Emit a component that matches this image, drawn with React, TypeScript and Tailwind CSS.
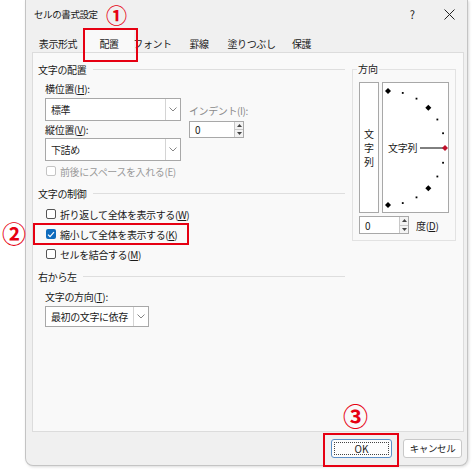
import React from 'react'

const jp = { fontFamily: '"Noto Sans CJK JP", "Noto Sans", sans-serif' }

function Chevron() {
  return (
    <svg width="8" height="5" viewBox="0 0 8 5" fill="none">
      <path d="M0.5 0.5 L4 4 L7.5 0.5" stroke="#777" strokeWidth="0.9" />
    </svg>
  )
}

function Select({ value, width, height = 23 }: { value: string; width: number; height?: number }) {
  return (
    <div className="flex border border-[#a8a8a8] bg-white" style={{ width, height }}>
      <div className="flex flex-1 items-center pl-[5px] text-[10px] tracking-[-0.4px] text-[#1a1a1a]">{value}</div>
      <div className="flex w-[15px] items-center justify-center border-l border-[#d4d4d4]">
        <Chevron />
      </div>
    </div>
  )
}

function Spinner() {
  return (
    <div className="flex w-[9px] flex-col border-l border-[#c8c8c8] bg-[#f3f3f3]">
      <div className="flex flex-1 items-center justify-center border-b border-[#c8c8c8]">
        <svg width="5" height="3" viewBox="0 0 5 3">
          <path d="M0 3 L2.5 0 L5 3 Z" fill="#444" />
        </svg>
      </div>
      <div className="flex flex-1 items-center justify-center">
        <svg width="5" height="3" viewBox="0 0 5 3">
          <path d="M0 0 L2.5 3 L5 0 Z" fill="#444" />
        </svg>
      </div>
    </div>
  )
}

function SpinBox({ width, height }: { width: number; height: number }) {
  return (
    <div className="flex border border-[#a8a8a8] bg-white" style={{ width, height }}>
      <div className="flex flex-1 items-center pl-[5px] text-[10px] text-[#1a1a1a]">0</div>
      <Spinner />
    </div>
  )
}

function Check({ checked = false, disabled = false, label }: { checked?: boolean; disabled?: boolean; label: React.ReactNode }) {
  return (
    <div className="flex h-[20px] items-center pl-[8px]">
      {checked ? (
        <div className="flex h-[10px] w-[10px] items-center justify-center rounded-[2px] bg-[#0f6cbd]">
          <svg width="8" height="7" viewBox="0 0 8 7" fill="none">
            <path d="M1 3.6 L3 5.6 L7 1.2" stroke="#fff" strokeWidth="1.2" />
          </svg>
        </div>
      ) : (
        <div className={`h-[10px] w-[10px] rounded-[2px] border bg-white ${disabled ? 'border-[#c4c4c4]' : 'border-[#555]'}`} />
      )}
      <span className={`ml-[4px] text-[10px] tracking-[-0.4px] ${disabled ? 'text-[#9a9a9a]' : 'text-[#1a1a1a]'}`}>{label}</span>
    </div>
  )
}

function SectionTitle({ children }: { children: React.ReactNode }) {
  return (
    <div className="flex h-[16px] items-center">
      <span className="text-[10px] tracking-[-0.3px] text-[#1a1a1a]">{children}</span>
      <div className="ml-[6px] h-px flex-1 bg-[#dedede]" />
    </div>
  )
}

function Dial() {
  const cx = 5
  const cy = 65
  const r = 57
  const marks = [90, 75, 60, 45, 30, 15, -15, -30, -45, -60, -75, -90]
  return (
    <svg width="65" height="129" viewBox="0 0 65 129">
      {marks.map((a) => {
        const x = cx + r * Math.cos((a * Math.PI) / 180)
        const y = cy - r * Math.sin((a * Math.PI) / 180)
        if (a % 45 === 0) return <path key={a} d={`M${x} ${y - 3} L${x + 3} ${y} L${x} ${y + 3} L${x - 3} ${y} Z`} fill="#000" />
        return <rect key={a} x={x - 0.9} y={y - 0.9} width="1.8" height="1.8" fill="#000" />
      })}
      <text x="5" y="69" fontSize="10" letterSpacing="-0.3" fill="#1a1a1a" style={jp}>
        文字列
      </text>
      <line x1="37" y1="65" x2="60" y2="65" stroke="#000" strokeWidth="1" />
      <path d="M62 62 L65 65 L62 68 L59 65 Z" fill="#c0102a" />
    </svg>
  )
}

const tabs = [
  { label: '表示形式', w: 52 },
  { label: '配置', w: 50, active: true },
  { label: 'フォント', w: 37 },
  { label: '罫線', w: 56 },
  { label: '塗りつぶし', w: 49 },
  { label: '保護', w: 51 },
]

export default function App() {
  return (
    <div className="relative h-[470px] w-[474px] overflow-hidden whitespace-nowrap bg-white" style={jp}>
      <div className="ml-[25px] flex h-[466px] w-[443px] flex-col rounded-b-[8px] border border-t-0 border-[#c4c4c4] bg-[#f0f0f0] shadow-[1px_1px_3px_rgba(0,0,0,0.15)]">
        {/* title bar */}
        <div className="flex h-[28px] items-center pl-[8px] pr-[12px]">
          <span className="text-[9.5px] tracking-[-0.4px] text-[#1a1a1a]">セルの書式設定</span>
          <span className="ml-auto text-[11px] text-[#1a1a1a]">?</span>
          <svg className="ml-[29px]" width="11" height="11" viewBox="0 0 11 11">
            <path d="M0.5 0.5 L10.5 10.5 M10.5 0.5 L0.5 10.5" stroke="#222" strokeWidth="1" />
          </svg>
        </div>

        {/* tabs */}
        <div className="flex h-[24px] pl-[6px]">
          {tabs.map((t) => (
            <div
              key={t.label}
              className={`flex justify-center pt-[9px] text-[10px] leading-[14px] tracking-[-0.4px] text-[#1a1a1a] ${t.active ? 'bg-[#f9f9f9]' : ''}`}
              style={{ width: t.w }}
            >
              {t.label}
            </div>
          ))}
        </div>

        {/* panel */}
        <div className="mx-[6px] mr-[3px] flex h-[380px] border border-[#dcdcdc] bg-[#f9f9f9] pl-[5px] pt-[8px]">
          <div className="flex w-[307px] flex-col">
            <SectionTitle>文字の配置</SectionTitle>
            <div className="ml-[7px] mt-[1px] flex h-[20px] items-center text-[10px] tracking-[-0.3px] text-[#1a1a1a]">
              横位置(<span className="underline">H</span>):
            </div>
            <div className="ml-[7px] flex">
              <div className="flex flex-col">
                <Select value="標準" width={136} />
                <div className="flex h-[17px] items-center text-[10px] tracking-[-0.3px] text-[#1a1a1a]">
                  縦位置(<span className="underline">V</span>):
                </div>
                <Select value="下詰め" width={136} />
              </div>
              <div className="ml-[8px] flex flex-col pt-[4px]">
                <div className="flex h-[16px] items-center text-[10px] tracking-[-0.4px] text-[#8a8a8a]">インデント(I):</div>
                <div className="mt-[3px]">
                  <SpinBox width={55} height={17} />
                </div>
              </div>
            </div>
            <Check disabled label="前後にスペースを入れる(E)" />
            <div className="mt-[4px]">
              <SectionTitle>文字の制御</SectionTitle>
            </div>
            <div className="mt-[3px]">
              <Check
                label={
                  <>
                    折り返して全体を表示する(<span className="underline">W</span>)
                  </>
                }
              />
              <Check
                checked
                label={
                  <>
                    縮小して全体を表示する(<span className="underline">K</span>)
                  </>
                }
              />
              <Check
                label={
                  <>
                    セルを結合する(<span className="underline">M</span>)
                  </>
                }
              />
            </div>
            <div className="mt-[4px]">
              <SectionTitle>右から左</SectionTitle>
            </div>
            <div className="ml-[7px] mt-[2px] flex h-[20px] items-center text-[10px] tracking-[-0.3px] text-[#1a1a1a]">
              文字の方向(<span className="underline">T</span>):
            </div>
            <div className="ml-[7px]">
              <Select value="最初の文字に依存" width={104} height={21} />
            </div>
          </div>

          {/* orientation group */}
          <div className="relative ml-[7px] mt-[8px] h-[172px] w-[104px] border border-[#e2e2e2] px-[6px] pt-[12px]">
            <span className="absolute -top-[9px] left-[4px] bg-[#f9f9f9] px-[1px] text-[10px] text-[#1a1a1a]">方向</span>
            <div className="flex gap-[3px]">
              <div className="flex h-[131px] w-[20px] flex-col items-center justify-center border border-[#a8a8a8] bg-white text-[10px] leading-[14px] text-[#1a1a1a]">
                <span>文</span>
                <span>字</span>
                <span>列</span>
              </div>
              <div className="h-[131px] w-[67px] border border-[#a8a8a8] bg-white">
                <Dial />
              </div>
            </div>
            <div className="mt-[3px] flex items-center">
              <SpinBox width={50} height={18} />
              <span className="ml-[7px] text-[10px] tracking-[-0.3px] text-[#1a1a1a]">
                度(<span className="underline">D</span>)
              </span>
            </div>
          </div>
        </div>

        {/* footer */}
        <div className="flex justify-end gap-[11px] pr-[5px] pt-[7px]">
          <div className="flex h-[19px] w-[61px] items-center justify-center rounded-[3px] border border-[#5b8fc7] bg-[#fdfdfd] p-[2px]">
            <div className="flex h-full w-full items-center justify-center border border-dotted border-[#444] text-[10px] text-[#1a1a1a]">
              OK
            </div>
          </div>
          <div className="flex h-[19px] w-[59px] items-center justify-center rounded-[3px] border border-[#c8c8c8] bg-white text-[9.5px] tracking-[-0.4px] text-[#1a1a1a]">
            キャンセル
          </div>
        </div>
      </div>

      {/* annotations */}
      <span className="absolute left-[106px] top-[1px] text-[21px] font-bold leading-[26px] text-[#e60012]">①</span>
      <div className="absolute left-[83px] top-[28px] h-[34px] w-[55px] border-2 border-[#e60012]" />
      <span className="absolute left-[2px] top-[218px] text-[24px] font-bold leading-[30px] text-[#e60012]">②</span>
      <div className="absolute left-[33px] top-[223px] h-[22px] w-[156px] border-2 border-[#e60012]" />
      <span className="absolute left-[343px] top-[400px] text-[25px] font-bold leading-[30px] text-[#e60012]">③</span>
      <div className="absolute left-[323px] top-[433px] h-[34px] w-[76px] border-2 border-[#e60012]" />
    </div>
  )
}
